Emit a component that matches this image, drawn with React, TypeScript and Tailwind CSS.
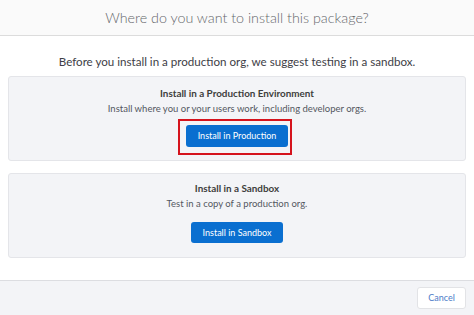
import React from "react";

export default function App() {
  return (
    <div
      className="w-[474px] h-[315px] bg-white flex flex-col overflow-hidden"
      style={{ fontFamily: 'Lato, "Noto Sans", sans-serif' }}
    >
      <div className="h-[36px] shrink-0 bg-[#fafafa] border-b border-[#dcdcdc] flex items-center justify-center">
        <span className="text-[14.3px] font-light text-[#65676b]">
          Where do you want to install this package?
        </span>
      </div>
      <div className="flex-1 bg-white px-2 pt-[16px] flex flex-col">
        <div className="h-[20px] flex items-center justify-center text-[11.6px] text-[#3e3e46]">
          Before you install in a production org, we suggest testing in a sandbox.
        </div>
        <div className="mt-[4px] h-[85px] border border-[#e4e5e9] bg-[#f3f4f7] rounded-[3px] flex flex-col items-center pt-[8px]">
          <div className="h-[16px] flex items-center text-[9.9px] font-bold text-[#3e3e3c]">
            Install in a Production Environment
          </div>
          <div className="h-[16px] flex items-center text-[9.5px] text-[#54575f]">
            Install where you or your users work, including developer orgs.
          </div>
          <div className="mt-[2px] mr-[4px] border-2 border-[#d5131d] pt-[4px] pb-[6px] pl-[6px] pr-[2px]">
            <div className="w-[102px] h-[22px] bg-[#0a6fd0] rounded-[3px] flex items-center justify-center text-[9px] text-white">
              Install in Production
            </div>
          </div>
        </div>
        <div className="mt-[12px] h-[85px] border border-[#e4e5e9] bg-[#f3f4f7] rounded-[3px] flex flex-col items-center pt-[6px]">
          <div className="h-[16px] flex items-center text-[9.9px] font-bold text-[#3e3e3c]">
            Install in a Sandbox
          </div>
          <div className="h-[16px] flex items-center text-[9.5px] text-[#54575f]">
            Test in a copy of a production org.
          </div>
          <div className="mt-[10px] w-[92px] h-[21px] bg-[#0a6fd0] rounded-[3px] flex items-center justify-center text-[9px] text-white">
            Install in Sandbox
          </div>
        </div>
      </div>
      <div className="h-[35px] shrink-0 bg-[#f3f4f7] border-t border-[#dcdde1] flex items-center justify-end pr-2">
        <div className="w-[49px] h-[22px] bg-white border border-[#e2e3e6] rounded-[3px] flex items-center justify-center text-[9px] text-[#4d7cc8]">
          Cancel
        </div>
      </div>
    </div>
  );
}
